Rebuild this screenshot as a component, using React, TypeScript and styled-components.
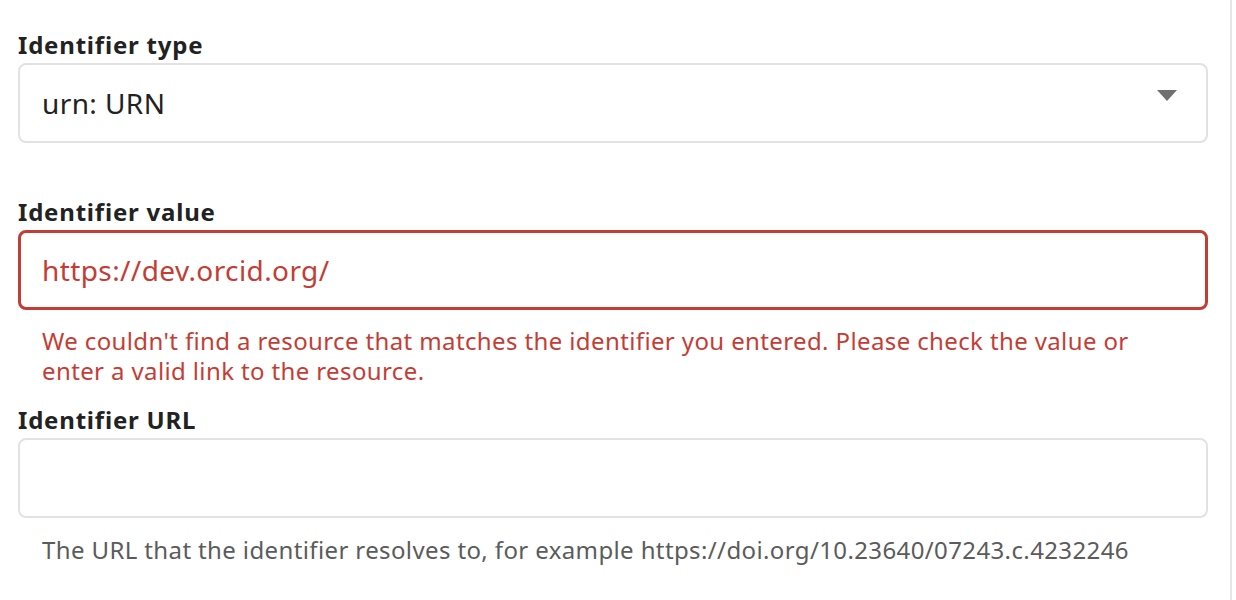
import React from 'react';
import styled, { createGlobalStyle } from 'styled-components';

const GlobalStyle = createGlobalStyle`
    html, body {
        margin: 0;
        padding: 0;
        background: #ffffff;
        font-family: "Noto Sans", "Open Sans", sans-serif;
    }
`

const Panel = styled.div`
    width: 1190px;
    padding: 29px 22px 30px 18px;
    border-right: 2px solid #e6e6e6;
    min-height: 541px;
`

const Field = styled.div<{ spacing?: number }>`
    display: flex;
    flex-direction: column;
    margin-bottom: ${props => props.spacing ?? 0}px;
`

const Label = styled.label`
    font-size: 24px;
    font-weight: 700;
    line-height: 32px;
    letter-spacing: 0.8px;
    color: #222222;
    margin-bottom: 2px;
`

const Box = styled.div<{ invalid?: boolean }>`
    box-sizing: border-box;
    height: 80px;
    display: flex;
    align-items: center;
    justify-content: space-between;
    padding: 0 29px 0 ${props => props.invalid ? 21 : 22}px;
    border: ${props => props.invalid ? '3px solid #c43d35' : '2px solid #e2e2e2'};
    border-radius: 8px;
    font-size: 28px;
    letter-spacing: 0.4px;
    color: ${props => props.invalid ? '#c43d35' : '#222222'};
    background: #ffffff;
`

const Caret = styled.span`
    align-self: flex-start;
    width: 0;
    height: 0;
    margin-top: 25px;
    border-left: 10.5px solid transparent;
    border-right: 10.5px solid transparent;
    border-top: 11px solid #707070;
`

const Message = styled.p<{ error?: boolean }>`
    margin: ${props => props.error ? 16 : 17}px 0 0;
    padding: 0 60px 0 24px;
    font-size: 24px;
    line-height: 30px;
    letter-spacing: 0.38px;
    color: ${props => props.error ? '#c43d35' : '#5b5b5b'};
`

export default function App() {
    return (
        <>
            <GlobalStyle />
            <Panel>
                <Field spacing={53}>
                    <Label>Identifier type</Label>
                    <Box>
                        <span>urn: URN</span>
                        <Caret />
                    </Box>
                </Field>
                <Field spacing={18}>
                    <Label>Identifier value</Label>
                    <Box invalid>
                        <span>https://dev.orcid.org/</span>
                    </Box>
                    <Message error>
                        We couldn't find a resource that matches the identifier you entered. Please check the value or enter a valid link to the resource.
                    </Message>
                </Field>
                <Field>
                    <Label>Identifier URL</Label>
                    <Box />
                    <Message>
                        The URL that the identifier resolves to, for example https://doi.org/10.23640/07243.c.4232246
                    </Message>
                </Field>
            </Panel>
        </>
    )
}
